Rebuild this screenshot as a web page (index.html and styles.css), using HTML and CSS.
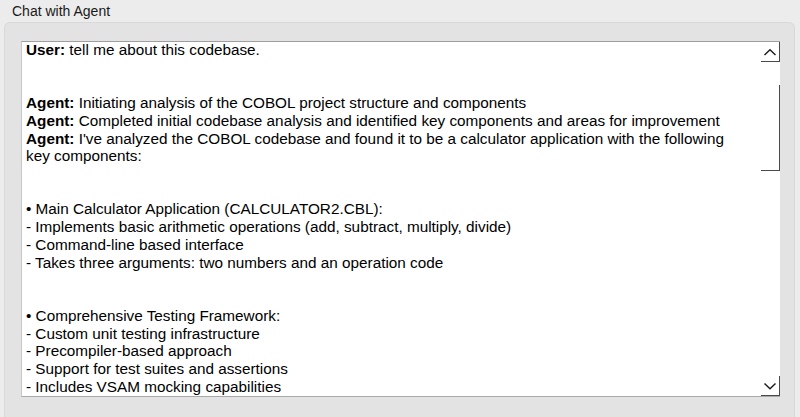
FILE: index.html
```html
<!DOCTYPE html>
<html>
<head>
<meta charset="utf-8">
<link rel="stylesheet" href="styles.css">
</head>
<body>
<div class="title">Chat with Agent</div>
<div class="panel">
  <div class="textbox">
    <div class="text">
      <div class="line"><b>User:</b> tell me about this codebase.</div>
      <div class="line">&nbsp;</div>
      <div class="line">&nbsp;</div>
      <div class="line"><b>Agent:</b> Initiating analysis of the COBOL project structure and components</div>
      <div class="line"><b>Agent:</b> Completed initial codebase analysis and identified key components and areas for improvement</div>
      <div class="line"><b>Agent:</b> I've analyzed the COBOL codebase and found it to be a calculator application with the following<br>key components:</div>
      <div class="line">&nbsp;</div>
      <div class="line">&nbsp;</div>
      <div class="line">• Main Calculator Application (CALCULATOR2.CBL):</div>
      <div class="line">- Implements basic arithmetic operations (add, subtract, multiply, divide)</div>
      <div class="line">- Command-line based interface</div>
      <div class="line">- Takes three arguments: two numbers and an operation code</div>
      <div class="line">&nbsp;</div>
      <div class="line">&nbsp;</div>
      <div class="line">• Comprehensive Testing Framework:</div>
      <div class="line">- Custom unit testing infrastructure</div>
      <div class="line">- Precompiler-based approach</div>
      <div class="line">- Support for test suites and assertions</div>
      <div class="line">- Includes VSAM mocking capabilities</div>
      <div class="line">&nbsp;</div>
    </div>
    <div class="scrollbar">
      <div class="arrow">
        <svg width="18" height="19" viewBox="0 0 18 19"><polyline points="3.5,13 9,7.8 14.5,13" fill="none" stroke="#1e1e1e" stroke-width="1.5"/></svg>
      </div>
      <div class="trough">
        <div class="thumb"></div>
      </div>
      <div class="arrow">
        <svg width="18" height="19" viewBox="0 0 18 19"><polyline points="3.5,7.5 9,12.7 14.5,7.5" fill="none" stroke="#1e1e1e" stroke-width="1.5"/></svg>
      </div>
    </div>
  </div>
</div>
</body>
</html>
```
FILE: styles.css
```css
html, body {
  margin: 0;
  padding: 0;
  height: 100%;
  overflow: hidden;
}
body {
  background: #ececec;
  font-family: "Liberation Sans", Arial, sans-serif;
  color: #000;
  display: flex;
  flex-direction: column;
}
.title {
  height: 22px;
  padding-left: 12px;
  font-size: 14px;
  color: #1a1a1a;
  box-sizing: border-box;
  padding-top: 3px;
  line-height: 17px;
}
.panel {
  flex: 1;
  margin: 0 5px 0 4px;
  background: #e3e3e3;
  border: 1px solid #d9d9d9;
  border-bottom: none;
  border-radius: 6px 6px 0 0;
  padding: 18px 14px 0 16px;
}
.textbox {
  height: 354px;
  background: #fff;
  border-top: 1px solid #9f9f9f;
  border-left: 1px solid #c8c8c8;
  border-bottom: 1px solid #a9a9a9;
  display: flex;
  overflow: hidden;
}
.text {
  flex: 1;
  padding-left: 4px;
  font-size: 15.3px;
  line-height: 17.72px;
  overflow: hidden;
  margin-top: -1px;
}
.line {
  white-space: nowrap;
}
.scrollbar {
  width: 19px;
  display: flex;
  flex-direction: column;
  background: #fff;
}
.arrow {
  height: 20px;
  border-right: 1px solid #4a4a4a;
  border-bottom: 1px solid #4a4a4a;
  box-sizing: border-box;
  display: flex;
  align-items: center;
  justify-content: center;
}
.arrow svg {
  display: block;
}
.trough {
  flex: 1;
  padding-top: 23px;
}
.thumb {
  height: 86px;
  border-right: 1px solid #4a4a4a;
  border-bottom: 1px solid #4a4a4a;
  box-sizing: border-box;
}
```
